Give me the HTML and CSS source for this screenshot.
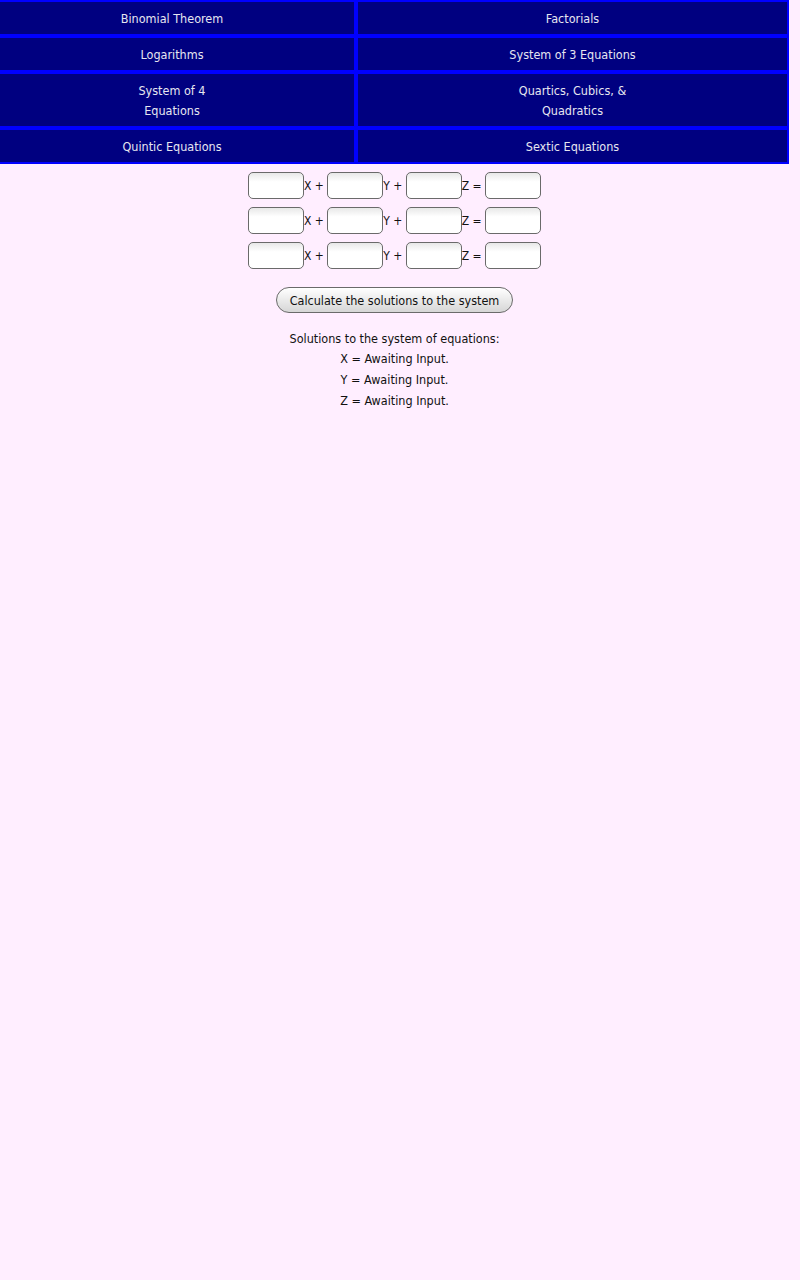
FILE: index.html
```html
<!DOCTYPE html>
<html>
<head>
<meta charset="utf-8">
<link rel="stylesheet" href="styles.css">
</head>
<body>
<nav class="nav">
  <a class="cell">Binomial Theorem</a>
  <a class="cell">Factorials</a>
  <a class="cell">Logarithms</a>
  <a class="cell">System of 3 Equations</a>
  <a class="cell">System of 4<br>Equations</a>
  <a class="cell">Quartics, Cubics, &amp;<br>Quadratics</a>
  <a class="cell">Quintic Equations</a>
  <a class="cell">Sextic Equations</a>
</nav>
<main class="main">
  <div class="rows">
    <div class="row"><input class="box"><span class="lbl">X + </span><input class="box"><span class="lbl">Y + </span><input class="box"><span class="lbl">Z = </span><input class="box"></div>
    <div class="row"><input class="box"><span class="lbl">X + </span><input class="box"><span class="lbl">Y + </span><input class="box"><span class="lbl">Z = </span><input class="box"></div>
    <div class="row"><input class="box"><span class="lbl">X + </span><input class="box"><span class="lbl">Y + </span><input class="box"><span class="lbl">Z = </span><input class="box"></div>
  </div>
  <button class="btn">Calculate the solutions to the system</button>
  <div class="results">
    <div class="head">Solutions to the system of equations:</div>
    <div class="res">X = Awaiting Input.</div>
    <div class="res">Y = Awaiting Input.</div>
    <div class="res">Z = Awaiting Input.</div>
  </div>
</main>
</body>
</html>
```
FILE: styles.css
```css
html, body {
  margin: 0;
  padding: 0;
  background: #ffeeff;
  font-family: "DejaVu Sans Condensed", "DejaVu Sans", sans-serif;
  font-size: 12.5px;
  color: #111;
}
.nav {
  display: grid;
  grid-template-columns: 364px 429px;
  gap: 4px;
  width: 801px;
  box-sizing: border-box;
  margin-left: -12px;
  border: 2px solid #0000ff;
  background: #0000ff;
}
.cell {
  background: #000080;
  color: #e6e6f0;
  text-align: center;
  padding: 7px 4px 5px;
  line-height: 20px;
}
.main {
  width: 789px;
  display: flex;
  flex-direction: column;
  align-items: center;
}
.rows {
  margin-top: 8px;
  display: flex;
  flex-direction: column;
  gap: 8px;
}
.row {
  display: flex;
  align-items: center;
}
.box {
  width: 56px;
  height: 27px;
  box-sizing: border-box;
  border: 1px solid #6a6a6a;
  border-radius: 5px;
  background: linear-gradient(#e8e8e8, #ffffff 35%);
  margin: 0;
  padding: 0;
}
.lbl {
  white-space: pre;
  font-size: 12px;
}
.btn {
  margin-top: 18px;
  height: 26px;
  padding: 1px 13px 0;
  border: 1px solid #6a6a6a;
  border-radius: 13px;
  background: linear-gradient(#ffffff, #d6d6d6);
  font-family: inherit;
  font-size: 12.5px;
  color: #111;
}
.results {
  margin-top: 16px;
  text-align: center;
}
.head {
  line-height: 19px;
}
.res {
  line-height: 21px;
}
```
